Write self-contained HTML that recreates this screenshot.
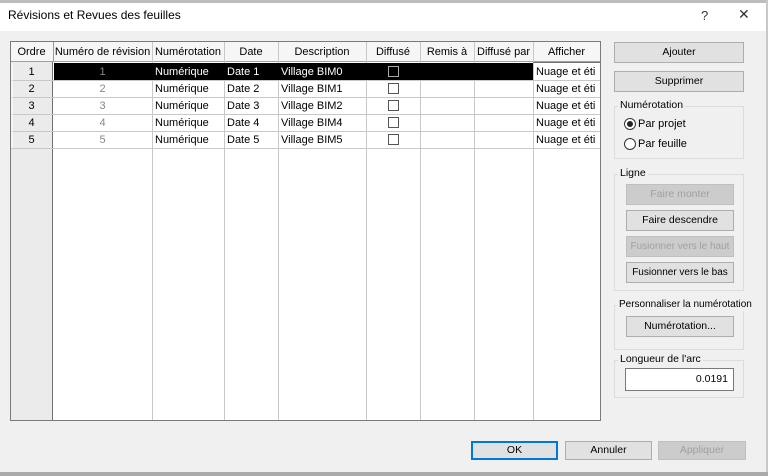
<!DOCTYPE html>
<html><head><meta charset="utf-8"><style>
*{box-sizing:border-box;margin:0;padding:0}
body{width:768px;height:476px;overflow:hidden;background:#f0f0f0;font-family:"Liberation Sans",sans-serif;font-size:11px;color:#000;position:relative}
.a{position:absolute}
.t{white-space:nowrap;line-height:17px}
.btn{position:absolute;background:#e1e1e1;border:1px solid #adadad;text-align:center;font-size:10.5px;line-height:19px;white-space:nowrap;overflow:hidden}
.dis{color:#a0a0a0;background:#cccccc;border-color:#bfbfbf}
.grp{position:absolute;border:1px solid #dcdcdc}
.gl{position:absolute;background:#f0f0f0;padding:0 2px;font-size:10.5px;line-height:13px;white-space:nowrap}
.cb{position:absolute;width:11px;height:11px;border:1px solid #555;background:#fff}
.r{margin-top:1px}
</style></head><body>
<div class="a" style="left:0;top:0;width:768px;height:3px;background:#bdbdbd"></div>
<div class="a" style="left:0;top:3px;width:766px;height:28px;background:#fff"></div>
<div class="a t" style="left:8px;top:7px;font-size:12px">Révisions et Revues des feuilles</div>
<div class="a t" style="left:701px;top:7px;font-size:13px;color:#333">?</div>
<div class="a t" style="left:738px;top:6px;font-size:14px;color:#333">✕</div>
<div class="a" style="left:766px;top:0;width:2px;height:476px;background:#c8c8c8"></div>
<div class="a" style="left:0;top:472px;width:768px;height:4px;background:#aaa"></div>

<div class="a" style="left:10px;top:41px;width:591px;height:380px;background:#fff;border:1px solid #7a7a7a"></div>
<div class="a" style="left:11px;top:42px;width:589px;height:20px;background:#f6f6f6;border-bottom:1px solid #a0a0a0"></div>
<div class="a" style="left:11px;top:62px;width:42px;height:358px;background:#ebebeb;border-right:1px solid #707070"></div>
<svg class="a" style="left:0;top:0" width="768" height="476">
<g stroke="#c8c8c8" stroke-width="1">
<line x1="152.5" y1="42" x2="152.5" y2="420"/><line x1="224.5" y1="42" x2="224.5" y2="420"/>
<line x1="278.5" y1="42" x2="278.5" y2="420"/><line x1="366.5" y1="42" x2="366.5" y2="420"/>
<line x1="420.5" y1="42" x2="420.5" y2="420"/><line x1="474.5" y1="42" x2="474.5" y2="420"/>
<line x1="533.5" y1="42" x2="533.5" y2="420"/>
<line x1="11" y1="97.5" x2="600" y2="97.5"/><line x1="11" y1="114.5" x2="600" y2="114.5"/>
<line x1="11" y1="131.5" x2="600" y2="131.5"/><line x1="11" y1="148.5" x2="600" y2="148.5"/>
<line x1="11" y1="80.5" x2="600" y2="80.5"/>
</g>
<g stroke="#999"><line x1="53.5" y1="42" x2="53.5" y2="62"/></g>
<g stroke="#fff"><line x1="12" y1="63" x2="12" y2="148"/></g>
</svg>
<div class="a" style="left:54px;top:63px;width:479px;height:17px;background:#000"></div>
<div class="a" style="left:533px;top:62px;width:67px;height:1px;background:#707070"></div>

<div class="a t" style="left:10px;top:44px;width:43px;text-align:center">Ordre</div>
<div class="a t" style="left:53px;top:44px;width:99px;text-align:center">Numéro de révision</div>
<div class="a t" style="left:152px;top:44px;width:72px;text-align:center">Numérotation</div>
<div class="a t" style="left:224px;top:44px;width:54px;text-align:center">Date</div>
<div class="a t" style="left:278px;top:44px;width:88px;text-align:center">Description</div>
<div class="a t" style="left:366px;top:44px;width:54px;text-align:center">Diffusé</div>
<div class="a t" style="left:420px;top:44px;width:54px;text-align:center">Remis à</div>
<div class="a t" style="left:474px;top:44px;width:59px;text-align:center">Diffusé par</div>
<div class="a t" style="left:533px;top:44px;width:67px;text-align:center">Afficher</div>

<div class="a t" style="left:10px;top:64px;width:43px;text-align:center">1</div>
<div class="a t" style="left:53px;top:64px;width:99px;text-align:center;color:#888">1</div>
<div class="a t" style="left:155px;top:64px;color:#fff">Numérique</div>
<div class="a t" style="left:227px;top:64px;color:#fff">Date 1</div>
<div class="a t" style="left:281px;top:64px;color:#fff">Village BIM0</div>
<div class="cb" style="left:388px;top:66px;background:#000;border-color:#aaa"></div>
<div class="a t" style="left:536px;top:64px">Nuage et éti</div>

<div class="a t" style="left:10px;top:81px;width:43px;text-align:center">2</div>
<div class="a t" style="left:53px;top:81px;width:99px;text-align:center;color:#888">2</div>
<div class="a t" style="left:155px;top:81px">Numérique</div>
<div class="a t" style="left:227px;top:81px">Date 2</div>
<div class="a t" style="left:281px;top:81px">Village BIM1</div>
<div class="cb" style="left:388px;top:83px"></div>
<div class="a t" style="left:536px;top:81px">Nuage et éti</div>

<div class="a t" style="left:10px;top:98px;width:43px;text-align:center">3</div>
<div class="a t" style="left:53px;top:98px;width:99px;text-align:center;color:#888">3</div>
<div class="a t" style="left:155px;top:98px">Numérique</div>
<div class="a t" style="left:227px;top:98px">Date 3</div>
<div class="a t" style="left:281px;top:98px">Village BIM2</div>
<div class="cb" style="left:388px;top:100px"></div>
<div class="a t" style="left:536px;top:98px">Nuage et éti</div>

<div class="a t" style="left:10px;top:115px;width:43px;text-align:center">4</div>
<div class="a t" style="left:53px;top:115px;width:99px;text-align:center;color:#888">4</div>
<div class="a t" style="left:155px;top:115px">Numérique</div>
<div class="a t" style="left:227px;top:115px">Date 4</div>
<div class="a t" style="left:281px;top:115px">Village BIM4</div>
<div class="cb" style="left:388px;top:117px"></div>
<div class="a t" style="left:536px;top:115px">Nuage et éti</div>

<div class="a t" style="left:10px;top:132px;width:43px;text-align:center">5</div>
<div class="a t" style="left:53px;top:132px;width:99px;text-align:center;color:#888">5</div>
<div class="a t" style="left:155px;top:132px">Numérique</div>
<div class="a t" style="left:227px;top:132px">Date 5</div>
<div class="a t" style="left:281px;top:132px">Village BIM5</div>
<div class="cb" style="left:388px;top:134px"></div>
<div class="a t" style="left:536px;top:132px">Nuage et éti</div>

<div class="btn" style="left:614px;top:42px;width:130px;height:21px">Ajouter</div>
<div class="btn" style="left:614px;top:71px;width:130px;height:21px">Supprimer</div>

<div class="grp" style="left:614px;top:106px;width:130px;height:53px"></div>
<div class="gl" style="left:618px;top:99px">Numérotation</div>
<div class="a" style="left:624px;top:118px;width:12px;height:12px;border:1px solid #333;border-radius:50%;background:#fff"></div>
<div class="a" style="left:627px;top:121px;width:6px;height:6px;border-radius:50%;background:#222"></div>
<div class="a t" style="left:638px;top:116px">Par projet</div>
<div class="a" style="left:624px;top:138px;width:12px;height:12px;border:1px solid #333;border-radius:50%;background:#fff"></div>
<div class="a t" style="left:638px;top:136px">Par feuille</div>

<div class="grp" style="left:614px;top:174px;width:130px;height:117px"></div>
<div class="gl" style="left:618px;top:167px">Ligne</div>
<div class="btn dis" style="left:626px;top:184px;width:108px;height:21px">Faire monter</div>
<div class="btn" style="left:626px;top:210px;width:108px;height:21px">Faire descendre</div>
<div class="btn dis" style="left:626px;top:236px;width:108px;height:21px;font-size:10px">Fusionner vers le haut</div>
<div class="btn" style="left:626px;top:262px;width:108px;height:21px;font-size:10px">Fusionner vers le bas</div>

<div class="grp" style="left:614px;top:305px;width:130px;height:45px"></div>
<div class="gl" style="left:617px;top:298px;font-size:10px">Personnaliser la numérotation</div>
<div class="btn" style="left:626px;top:316px;width:108px;height:21px">Numérotation...</div>

<div class="grp" style="left:614px;top:360px;width:130px;height:38px"></div>
<div class="gl" style="left:618px;top:353px">Longueur de l'arc</div>
<div class="a" style="left:625px;top:368px;width:109px;height:23px;background:#fff;border:1px solid #7a7a7a;text-align:right;padding-right:5px;line-height:21px;font-size:10.5px">0.0191</div>

<div class="btn" style="left:471px;top:441px;width:87px;height:19px;border:1px solid #0078d7;line-height:17px;box-shadow:inset 0 0 0 1px #0078d7">OK</div>
<div class="btn" style="left:565px;top:441px;width:87px;height:19px;line-height:17px">Annuler</div>
<div class="btn dis" style="left:658px;top:441px;width:88px;height:19px;line-height:17px">Appliquer</div>
</body></html>
